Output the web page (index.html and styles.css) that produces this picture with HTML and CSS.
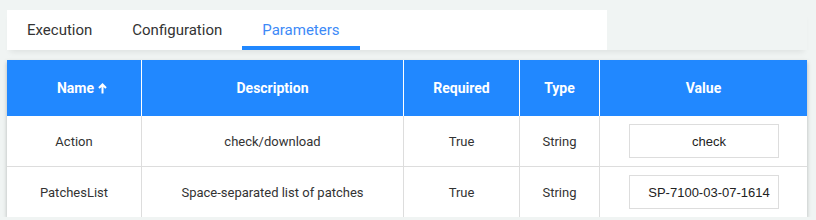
FILE: index.html
```html
<!DOCTYPE html>
<html lang="en">
<head>
    <meta charset="UTF-8">
    <title>Parameters</title>
    <link rel="stylesheet" href="styles.css">
</head>
<body>
    <div class="page">
        <div class="tab-strip">
            <ul class="tabs">
                <li class="tab">Execution</li>
                <li class="tab">Configuration</li>
                <li class="tab active">Parameters</li>
            </ul>
        </div>

        <table class="params">
            <thead>
                <tr>
                    <th class="col-name">Name<svg class="sort" width="9" height="11" viewBox="0 0 9 11"><path d="M4.5 10.5V1.5M1 5l3.5-3.5L8 5" fill="none" stroke="white" stroke-width="2"/></svg></th>
                    <th class="col-desc">Description</th>
                    <th class="col-req">Required</th>
                    <th class="col-type">Type</th>
                    <th class="col-value">Value</th>
                </tr>
            </thead>
            <tbody>
                <tr>
                    <td>Action</td>
                    <td>check/download</td>
                    <td>True</td>
                    <td>String</td>
                    <td><input class="value-input" type="text" value="check"></td>
                </tr>
                <tr>
                    <td>PatchesList</td>
                    <td>Space-separated list of patches</td>
                    <td>True</td>
                    <td>String</td>
                    <td><input class="value-input" type="text" value="SP-7100-03-07-1614"></td>
                </tr>
            </tbody>
        </table>
    </div>
</body>
</html>
```

FILE: styles.css
```css
body {
    margin: 0;
    background-color: #f0f4f3;
    font-family: 'Roboto', sans-serif;
    color: #333;
}
.page {
    padding: 10px 9px 0 7px;
}
.tab-strip {
    box-shadow: 0 5px 6px -3px rgba(0, 0, 0, 0.08);
    margin-bottom: 10px;
}
.tabs {
    display: flex;
    list-style: none;
    margin: 0;
    padding: 0;
    width: 600px;
    height: 40px;
    background-color: white;
}
.tab {
    padding: 0 20px;
    font-size: 15px;
    line-height: 40px;
    box-sizing: border-box;
    height: 40px;
    color: #333;
    cursor: pointer;
}
.tab.active {
    color: #3d8af7;
    border-bottom: 4px solid #2188ff;
}
.params {
    width: 800px;
    border-collapse: collapse;
    background-color: white;
    box-shadow: 0 2px 4px rgba(0, 0, 0, 0.25);
    font-size: 13px;
}
.params th {
    background-color: #2188ff;
    color: white;
    font-weight: bold;
    font-size: 14px;
    height: 56px;
    padding: 0;
    border-left: 1px solid white;
}
.params th:first-child {
    border-left: none;
    padding-left: 16px;
}
.sort {
    margin-left: 4px;
    vertical-align: -1px;
}
.col-name { width: 118px; }
.col-desc { width: 261px; }
.col-req { width: 115px; }
.col-type { width: 79px; }
.params td {
    height: 50px;
    padding: 0;
    text-align: center;
    border-left: 1px solid #ddd;
    border-top: 1px solid #ddd;
}
.params td:first-child {
    border-left: none;
}
.params tbody tr:first-child td {
    border-top: none;
}
.value-input {
    width: 150px;
    height: 34px;
    box-sizing: border-box;
    border: 1px solid #ddd;
    font-family: 'Liberation Sans', Arial, sans-serif;
    font-size: 13px;
    color: #222;
    text-align: center;
    padding: 0 4px 0 14px;
    margin-left: 1px;
}
```
